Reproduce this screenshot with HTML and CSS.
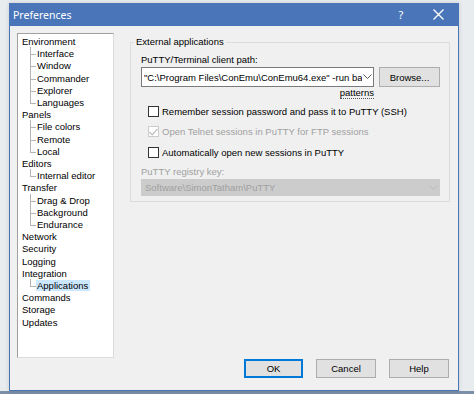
FILE: index.html
```html
<!DOCTYPE html>
<html>
<head>
<meta charset="utf-8">
<link rel="stylesheet" href="styles.css">
</head>
<body>
<div class="desktop">
  <div class="dialog">
    <div class="titlebar">
      <span class="title">Preferences</span>
      <span class="tb-help">?</span>
      <span class="tb-close"><svg width="11" height="11" viewBox="0 0 11 11"><path d="M0.5 0.5L10.5 10.5M10.5 0.5L0.5 10.5" stroke="#fff" stroke-width="1.3"/></svg></span>
    </div>
    <div class="body">
      <div class="main">
        <ul class="tree">
          <li class="node">Environment
            <ul class="children">
              <li class="child">Interface</li>
              <li class="child">Window</li>
              <li class="child">Commander</li>
              <li class="child">Explorer</li>
              <li class="child">Languages</li>
            </ul>
          </li>
          <li class="node">Panels
            <ul class="children">
              <li class="child">File colors</li>
              <li class="child">Remote</li>
              <li class="child">Local</li>
            </ul>
          </li>
          <li class="node">Editors
            <ul class="children">
              <li class="child">Internal editor</li>
            </ul>
          </li>
          <li class="node">Transfer
            <ul class="children">
              <li class="child">Drag &amp; Drop</li>
              <li class="child">Background</li>
              <li class="child">Endurance</li>
            </ul>
          </li>
          <li class="node">Network</li>
          <li class="node">Security</li>
          <li class="node">Logging</li>
          <li class="node">Integration
            <ul class="children">
              <li class="child"><span class="sel">Applications</span></li>
            </ul>
          </li>
          <li class="node">Commands</li>
          <li class="node">Storage</li>
          <li class="node">Updates</li>
        </ul>
        <div class="page">
          <fieldset class="group">
            <legend>External applications</legend>
            <div class="label">PuTTY/Terminal client path:</div>
            <div class="pathrow">
              <div class="combo"><span class="combo-text">"C:\Program Files\ConEmu\ConEmu64.exe" -run ba</span><span class="chev"><svg width="9" height="6" viewBox="0 0 9 6"><path d="M0.5 0.5L4.5 4.5L8.5 0.5" fill="none" stroke="#555" stroke-width="1"/></svg></span></div>
              <button class="btn browse">Browse...</button>
            </div>
            <div class="patterns-row"><span class="patterns">patterns</span></div>
            <label class="check c1"><span class="box"></span>Remember session password and pass it to PuTTY (SSH)</label>
            <label class="check c2 disabled"><span class="box"><svg width="9" height="8" viewBox="0 0 9 8"><path d="M0.5 4L3.2 6.8L8.5 0.8" fill="none" stroke="#bcbcbc" stroke-width="1.2"/></svg></span>Open Telnet sessions in PuTTY for FTP sessions</label>
            <label class="check c3"><span class="box"></span>Automatically open new sessions in PuTTY</label>
            <div class="label dim">PuTTY registry key:</div>
            <div class="combo wide disabled"><span class="combo-text">Software\SimonTatham\PuTTY</span><span class="chev"><svg width="9" height="6" viewBox="0 0 9 6"><path d="M0.5 0.5L4.5 4.5L8.5 0.5" fill="none" stroke="#b8b8b8" stroke-width="1"/></svg></span></div>
          </fieldset>
        </div>
      </div>
      <div class="buttons">
        <button class="btn default">OK</button>
        <button class="btn">Cancel</button>
        <button class="btn">Help</button>
      </div>
    </div>
  </div>
</div>
</body>
</html>
```
FILE: styles.css
```css
* { box-sizing: border-box; }
html, body { margin: 0; padding: 0; }
body {
  width: 474px;
  height: 394px;
  overflow: hidden;
  background: #d9dfe6;
  font-family: "Liberation Sans", Arial, sans-serif;
  font-size: 9.5px;
  color: #000;
}
.desktop {
  height: 394px;
  padding: 3px 15px 0 9px;
  background: linear-gradient(to bottom, #e9ecef 0, #e9ecef 391px, #7b8fa8 391px);
}
.dialog {
  width: 450px;
  height: 388px;
  border: 1px solid #4a75b5;
  border-top: none;
  background: #f0f0f0;
  display: flex;
  flex-direction: column;
  box-shadow: 0 0 4px rgba(0,0,0,0.15);
}
.titlebar {
  height: 23px;
  background: #4a76b9;
  color: #fff;
  display: flex;
  align-items: center;
  padding-left: 4px;
  margin: 0 -1px;
}
.title { font-family: "Noto Sans", "Open Sans", sans-serif; font-size: 10.5px; flex: 1; }
.tb-help { font-family: "Noto Sans", sans-serif; font-size: 11px; width: 18px; margin-right: 23px; text-align: center; }
.tb-close { width: 14px; margin-right: 12px; display: flex; align-items: center; }
.body { flex: 1; display: flex; flex-direction: column; padding: 7px 0 0 7px; }
.main { display: flex; flex: 1; }
.tree {
  list-style: none;
  margin: 0;
  padding: 2px 0 0 4px;
  width: 97px;
  height: 325px;
  background: #fff;
  border: 1px solid #a0a0a0;
  border-right-color: #dcdcdc;
  border-bottom-color: #dcdcdc;
  line-height: 12.2px;
  white-space: nowrap;
}
.node { list-style: none; }
.children { list-style: none; margin: 0; padding: 0 0 0 8px; }
.child { position: relative; padding-left: 7px; }
.child::before {
  content: "";
  position: absolute;
  left: 0;
  top: -1px;
  height: 7px;
  width: 5px;
  border-left: 1px solid #b4b4b4;
  border-bottom: 1px solid #b4b4b4;
}
.child:not(:last-child)::after {
  content: "";
  position: absolute;
  left: 0;
  top: 6px;
  bottom: -1px;
  border-left: 1px solid #b4b4b4;
}
.sel { background: #cce8ff; padding: 0 2px 0 1px; margin-left: -1px; }
.page { flex: 1; padding: 3px 0 0 16px; }
.group {
  margin: 0;
  width: 320px;
  height: 166px;
  border: 1px solid #dcdcdc;
  padding: 6px 0 0 10px;
}
.group legend { padding: 0 2px; margin-left: -7px; line-height: 12px; }
.label { line-height: 12px; }
.label.dim { color: #a0a0a0; margin-top: 7px; }
.pathrow { display: flex; align-items: center; margin-top: 1px; }
.combo {
  width: 233px;
  height: 20px;
  border: 1px solid #7a7a7a;
  background: #fff;
  display: flex;
  align-items: center;
  padding-left: 2px;
}
.combo-text { flex: 1; overflow: hidden; white-space: nowrap; }
.chev { width: 11px; flex: none; display: flex; align-items: center; justify-content: center; }
.combo.wide { width: 299px; height: 17px; margin-top: 1px; padding-left: 3px; }
.combo.disabled { background: #cccccc; border-color: #cccccc; color: #a0a0a0; }
.btn {
  font: inherit;
  height: 19px;
  width: 60px;
  background: #e1e1e1;
  border: 1px solid #adadad;
  padding: 0;
  color: #000;
}
.browse { margin-left: 5px; width: 61px; height: 20px; }
.patterns-row { display: flex; justify-content: flex-end; width: 233px; height: 12px; line-height: 11px; }
.patterns { border-bottom: 1px dotted #555; }
.check { display: flex; align-items: center; height: 13px; margin-left: 7px; }
.c1 { margin-top: 6px; }
.c2 { margin-top: 7px; }
.c3 { margin-top: 8px; }
.box {
  width: 11px;
  height: 11px;
  border: 1px solid #333;
  background: #fff;
  margin-right: 3px;
  display: flex;
  align-items: center;
  justify-content: center;
}
.check.disabled { color: #a0a0a0; }
.check.disabled .box { border-color: #ccc; background: #fff; }
.buttons { display: flex; justify-content: flex-end; align-items: flex-start; gap: 13px; padding: 0 9px 0 0; height: 31px; }
.btn.default { border: 2px solid #0078d7; width: 59px; }
```
